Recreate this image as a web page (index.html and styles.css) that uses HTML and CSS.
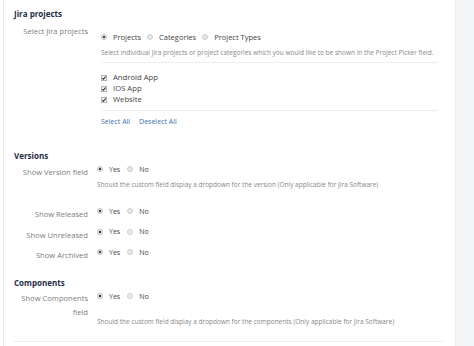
FILE: index.html
```html
<!DOCTYPE html>
<html lang="en">
<head>
  <meta charset="UTF-8" />
  <title>Project Picker settings</title>
  <link rel="stylesheet" href="styles.css">
</head>
<body>
  <div class="page">
    <div class="content">

      <!-- Jira projects -->
      <h3 class="section-title first">Jira projects</h3>
      <div class="row row-projects">
        <div class="label">Select Jira projects</div>
        <div class="field field-projects">
          <div class="options">
            <span class="opt"><span class="radio checked"></span>Projects</span>
            <span class="opt"><span class="radio"></span>Categories</span>
            <span class="opt"><span class="radio"></span>Project Types</span>
          </div>
          <div class="desc desc-projects">Select individual Jira projects or project categories which you would like to be shown in the Project Picker field.</div>
          <div class="project-list">
            <div class="check-item"><svg class="check" viewBox="0 0 7 7"><rect x="0.5" y="0.5" width="6" height="6" fill="#f4f4f4" stroke="#aaa"/><path d="M1.6 3.6 L2.9 5 L5.5 1.8" fill="none" stroke="#222" stroke-width="1.2"/></svg>Android App</div>
            <div class="check-item"><svg class="check" viewBox="0 0 7 7"><rect x="0.5" y="0.5" width="6" height="6" fill="#f4f4f4" stroke="#aaa"/><path d="M1.6 3.6 L2.9 5 L5.5 1.8" fill="none" stroke="#222" stroke-width="1.2"/></svg>IOS App</div>
            <div class="check-item"><svg class="check" viewBox="0 0 7 7"><rect x="0.5" y="0.5" width="6" height="6" fill="#f4f4f4" stroke="#aaa"/><path d="M1.6 3.6 L2.9 5 L5.5 1.8" fill="none" stroke="#222" stroke-width="1.2"/></svg>Website</div>
          </div>
          <div class="links">
            <a href="#">Select All</a>
            <a href="#">Deselect All</a>
          </div>
        </div>
      </div>

      <!-- Versions -->
      <h3 class="section-title versions">Versions</h3>
      <div class="row">
        <div class="label">Show Version field</div>
        <div class="field">
          <div class="options yes-no">
            <span class="opt"><span class="radio checked"></span>Yes</span>
            <span class="opt"><span class="radio"></span>No</span>
          </div>
          <div class="desc">Should the custom field display a dropdown for the version (Only applicable for Jira Software)</div>
        </div>
      </div>
      <div class="row row-released">
        <div class="label">Show Released</div>
        <div class="field">
          <div class="options yes-no">
            <span class="opt"><span class="radio checked"></span>Yes</span>
            <span class="opt"><span class="radio"></span>No</span>
          </div>
        </div>
      </div>
      <div class="row row-next">
        <div class="label">Show Unreleased</div>
        <div class="field">
          <div class="options yes-no">
            <span class="opt"><span class="radio checked"></span>Yes</span>
            <span class="opt"><span class="radio"></span>No</span>
          </div>
        </div>
      </div>
      <div class="row row-next">
        <div class="label">Show Archived</div>
        <div class="field">
          <div class="options yes-no">
            <span class="opt"><span class="radio checked"></span>Yes</span>
            <span class="opt"><span class="radio"></span>No</span>
          </div>
        </div>
      </div>

      <!-- Components -->
      <h3 class="section-title components">Components</h3>
      <div class="row">
        <div class="label two-line">Show Components<br>field</div>
        <div class="field">
          <div class="options yes-no">
            <span class="opt"><span class="radio checked"></span>Yes</span>
            <span class="opt"><span class="radio"></span>No</span>
          </div>
          <div class="desc desc-components">Should the custom field display a dropdown for the components (Only applicable for Jira Software)</div>
        </div>
      </div>
      <div class="bottom-line"></div>

    </div>
    <aside class="side"></aside>
  </div>
</body>
</html>
```

FILE: styles.css
```css
/* Whole page */
body {
  margin: 0;
  padding: 0;
  background-color: white;
  font-family: "Open Sans", "Noto Sans", Arial, sans-serif;
  color: #444;
}

.page {
  display: flex;
  height: 346px;
  overflow: hidden;
}

/* Main form column */
.content {
  width: 429px;
  margin-left: 3px;
  padding: 0 12px 0 10px;
  border-left: 1px solid #ececec;
}

/* Grey panel on the right */
.side {
  flex: 1;
  background-color: #f4f5f7;
  border-left: 1px solid #eceef1;
}

/* Section headings */
.section-title {
  margin: 0;
  font-size: 8px;
  font-weight: bold;
  line-height: 14px;
  color: #1f2d45;
}

.section-title.first {
  padding-top: 7px;
}

.section-title.versions {
  margin-top: 21px;
}

.section-title.components {
  margin-top: 15px;
}

/* Label + field rows */
.row {
  display: grid;
  grid-template-columns: 74px 1fr;
  column-gap: 9px;
}

.row-released {
  margin-top: 15px;
}

.row-next {
  margin-top: 5.5px;
}

.label {
  text-align: right;
  font-size: 7.6px;
  line-height: 12px;
  color: #7a7d82;
  padding-top: 3px;
}

.label.two-line {
  line-height: 13.5px;
  padding-top: 2px;
}

.row-projects {
  margin-top: 4px;
}

.row-projects .label {
  padding-top: 0;
}

.field-projects {
  padding: 6px 5px 0 4px;
}

/* Radio buttons */
.options {
  display: flex;
  align-items: center;
  gap: 6px;
  height: 12px;
  font-size: 7.5px;
  color: #444;
}

.yes-no {
  font-size: 7px;
  gap: 7px;
}

.opt {
  display: inline-flex;
  align-items: center;
  gap: 6px;
}

.radio {
  display: inline-block;
  width: 4px;
  height: 4px;
  border-radius: 50%;
  border: 1px solid #cdcdcd;
  background-color: #e8e8e8;
}

.radio.checked {
  background: radial-gradient(circle, #444 0 1.2px, #e8e8e8 1.6px);
  border-color: #c0c0c0;
}

/* Help text under a field */
.desc {
  margin-top: 5px;
  font-size: 6.5px;
  line-height: 10px;
  color: #85888c;
  white-space: nowrap;
}

.desc-components {
  margin-top: 15px;
}

/* Project checkbox list */
.project-list {
  margin-top: 4px;
  border-top: 1px solid #ededed;
  border-bottom: 1px solid #ededed;
  padding: 9px 0 5px;
}

.check-item {
  display: flex;
  align-items: center;
  gap: 6px;
  font-size: 7.7px;
  line-height: 11px;
  color: #444;
}

.check {
  width: 6px;
  height: 6px;
}

.links {
  margin-top: 5px;
  display: flex;
  gap: 9px;
  font-size: 7px;
  line-height: 12px;
}

.links a {
  color: #3b73af;
  text-decoration: none;
}

.bottom-line {
  margin-top: 14px;
  border-top: 1px solid #ededed;
}
```
